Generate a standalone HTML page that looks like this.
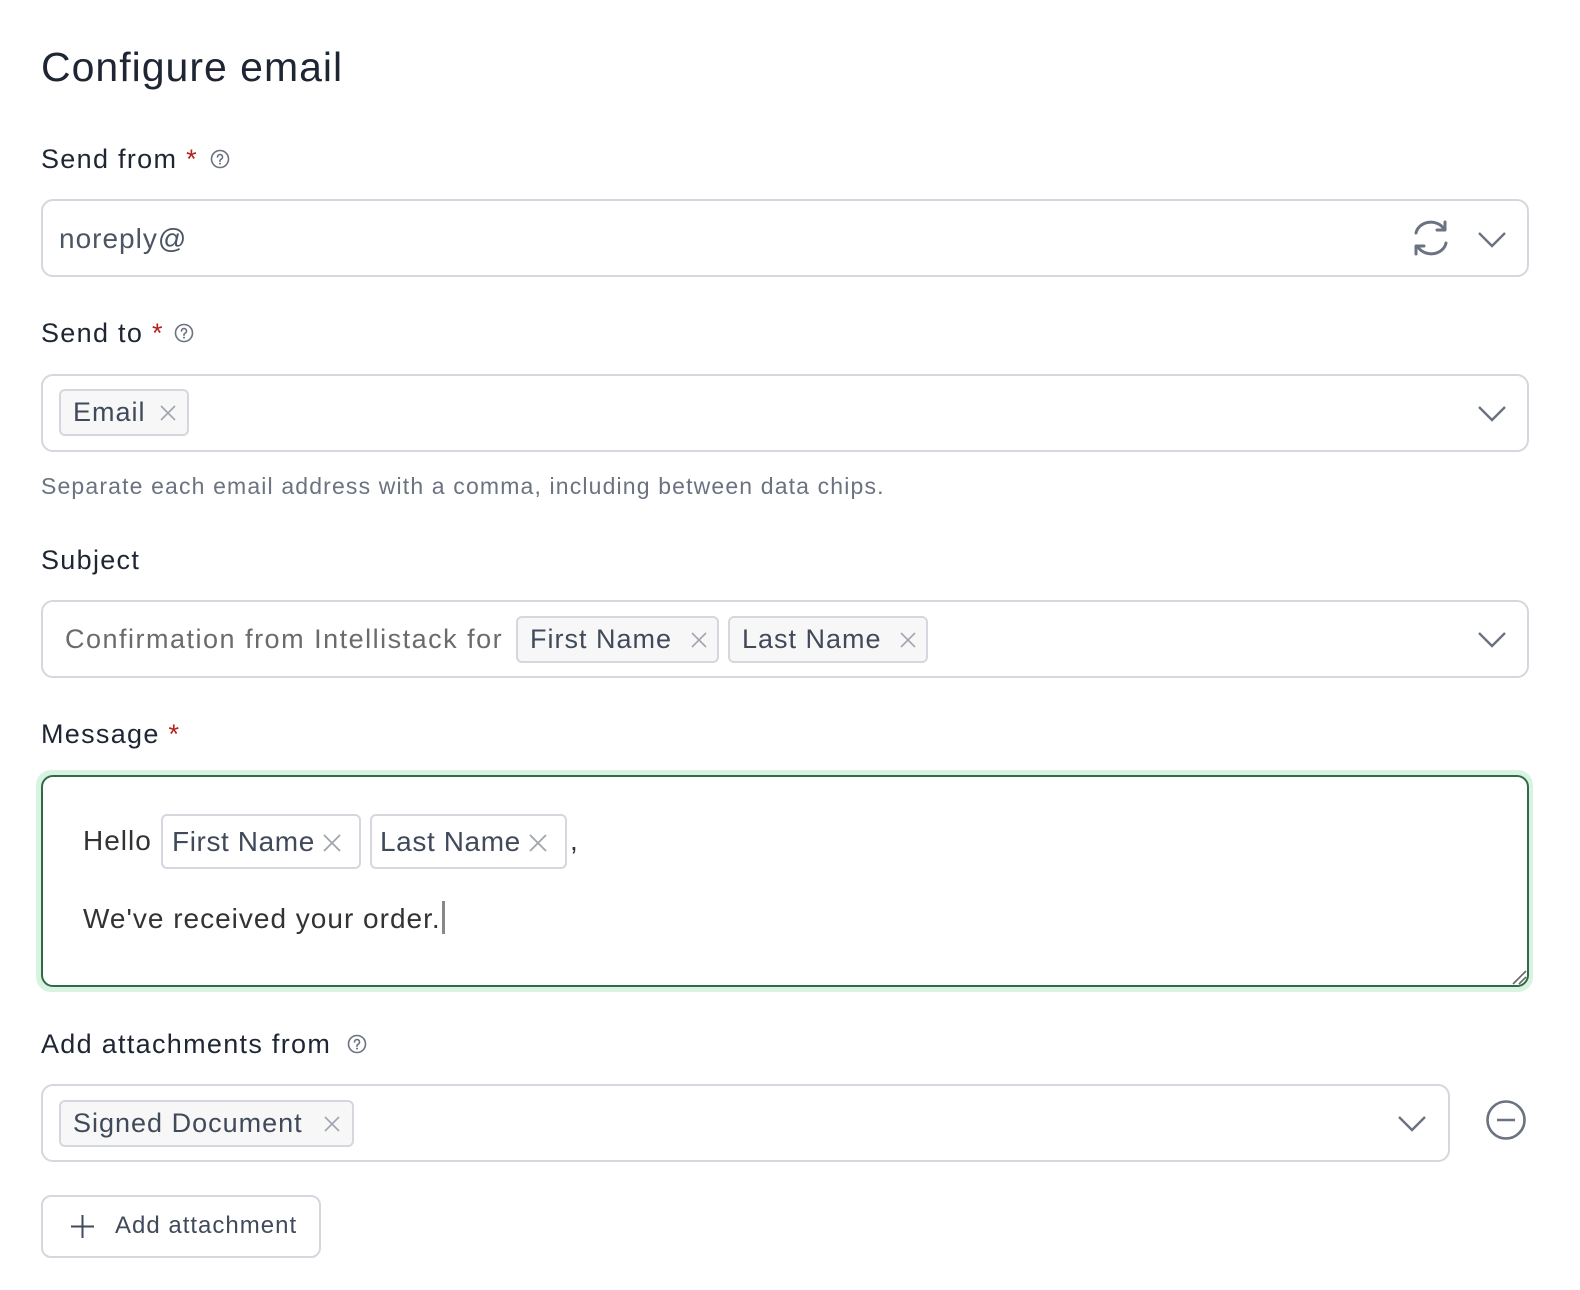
<!DOCTYPE html>
<html><head><meta charset="utf-8"><style>
*{box-sizing:border-box;margin:0;padding:0}
body{width:1580px;height:1290px;background:#fff;font-family:"Liberation Sans",Arial,sans-serif;position:relative;overflow:hidden;color:#1f2937;letter-spacing:1px}
.a{position:absolute;white-space:nowrap}
.t{left:41px;top:42px;font-size:41px;color:#1e2533;line-height:50px;letter-spacing:1px}
.l{left:41px;font-size:27px;line-height:34px;color:#1e2533;letter-spacing:1.3px}
.req{color:#b42318}
.box{position:absolute;left:41px;width:1488px;height:78px;border:2px solid #d4d7dd;border-radius:12px;background:#fff}
.chip{position:absolute;height:47px;border:2px solid #d4d7dd;border-radius:6px;background:#f7f7f8;font-size:27px;color:#414a5a;line-height:43px;padding-left:12px;white-space:nowrap}
.chip svg{position:absolute;top:14px}
.help{position:absolute;width:20px;height:20px}
.chev{position:absolute;width:30px;height:18px}
</style></head><body>
<div class="a t">Configure email</div>

<div class="a l" style="top:142px">Send from <span class="req">*</span></div>
<svg class="help" style="left:210px;top:149px" viewBox="0 0 20 20"><circle cx="10" cy="10" r="8.5" fill="none" stroke="#6b7280" stroke-width="1.6"/><path d="M7.5 8a2.5 2.5 0 1 1 3.5 2.3c-.7.3-1 .8-1 1.5v.4" fill="none" stroke="#6b7280" stroke-width="1.6" stroke-linecap="round"/><circle cx="10" cy="14.6" r="1" fill="#6b7280"/></svg>
<div class="box" style="top:199px"></div>
<div class="a" style="left:59px;top:222px;font-size:28px;color:#4b5563;line-height:34px">noreply@</div>
<svg class="a" style="left:1411px;top:218px" width="40" height="40" viewBox="0 0 40 40"><path d="M5 15a15 13 0 0 1 28-4" fill="none" stroke="#6b7280" stroke-width="3" stroke-linecap="round"/><path d="M34 4v8h-8" fill="none" stroke="#6b7280" stroke-width="3" stroke-linecap="round" stroke-linejoin="round"/><path d="M35 25a15 13 0 0 1-28 4" fill="none" stroke="#6b7280" stroke-width="3" stroke-linecap="round"/><path d="M5 36v-8h8" fill="none" stroke="#6b7280" stroke-width="3" stroke-linecap="round" stroke-linejoin="round"/></svg>
<svg class="chev" style="left:1477px;top:230px" viewBox="0 0 30 18"><path d="M2 3l13 13 13-13" fill="none" stroke="#6b7280" stroke-width="2.4"/></svg>

<div class="a l" style="top:316px">Send to <span class="req">*</span></div>
<svg class="help" style="left:174px;top:323px" viewBox="0 0 20 20"><circle cx="10" cy="10" r="8.5" fill="none" stroke="#6b7280" stroke-width="1.6"/><path d="M7.5 8a2.5 2.5 0 1 1 3.5 2.3c-.7.3-1 .8-1 1.5v.4" fill="none" stroke="#6b7280" stroke-width="1.6" stroke-linecap="round"/><circle cx="10" cy="14.6" r="1" fill="#6b7280"/></svg>
<div class="box" style="top:374px"></div>
<div class="chip" style="left:59px;top:389px;width:130px">Email<svg style="left:99px" width="16" height="16" viewBox="0 0 16 16"><path d="M1 1l14 14M15 1L1 15" stroke="#a0a5ae" stroke-width="1.6"/></svg></div>
<svg class="chev" style="left:1477px;top:404px" viewBox="0 0 30 18"><path d="M2 3l13 13 13-13" fill="none" stroke="#6b7280" stroke-width="2.4"/></svg>
<div class="a" style="left:41px;top:472px;font-size:23px;color:#6b7280;line-height:28px;letter-spacing:1.15px">Separate each email address with a comma, including between data chips.</div>

<div class="a l" style="top:543px">Subject</div>
<div class="box" style="top:600px"></div>
<div class="a" style="left:65px;top:622px;font-size:27px;color:#6b6b6b;line-height:34px;letter-spacing:1.5px">Confirmation from Intellistack for</div>
<div class="chip" style="left:516px;top:616px;width:203px">First Name<svg style="left:173px" width="16" height="16" viewBox="0 0 16 16"><path d="M1 1l14 14M15 1L1 15" stroke="#a0a5ae" stroke-width="1.6"/></svg></div>
<div class="chip" style="left:728px;top:616px;width:200px">Last Name<svg style="left:170px" width="16" height="16" viewBox="0 0 16 16"><path d="M1 1l14 14M15 1L1 15" stroke="#a0a5ae" stroke-width="1.6"/></svg></div>
<svg class="chev" style="left:1477px;top:630px" viewBox="0 0 30 18"><path d="M2 3l13 13 13-13" fill="none" stroke="#6b7280" stroke-width="2.4"/></svg>

<div class="a l" style="top:717px">Message <span class="req">*</span></div>
<div class="a" style="left:36px;top:770px;width:1497px;height:222px;border-radius:15px;background:#d9f3e3"></div>
<div class="a" style="left:41px;top:775px;width:1488px;height:212px;border:2px solid #2f6b45;border-radius:12px;background:#fff"></div>
<div class="a" style="left:83px;top:824px;font-size:28px;color:#333;line-height:34px">Hello</div>
<div class="chip" style="left:161px;top:814px;width:200px;height:55px;line-height:51px;background:#fff;padding-left:9px;font-size:28px;letter-spacing:.6px">First Name<svg style="left:160px;top:18px" width="18" height="18" viewBox="0 0 18 18"><path d="M1 1l16 16M17 1L1 17" stroke="#a0a5ae" stroke-width="1.8"/></svg></div>
<div class="chip" style="left:370px;top:814px;width:197px;height:55px;line-height:51px;background:#fff;padding-left:8px;font-size:28px;letter-spacing:.6px">Last Name<svg style="left:157px;top:18px" width="18" height="18" viewBox="0 0 18 18"><path d="M1 1l16 16M17 1L1 17" stroke="#a0a5ae" stroke-width="1.8"/></svg></div>
<div class="a" style="left:570px;top:824px;font-size:28px;color:#333;line-height:34px">,</div>
<div class="a" style="left:83px;top:902px;font-size:28px;color:#333;line-height:34px">We've received your order.</div>
<div class="a" style="left:442px;top:901px;width:3px;height:33px;background:#888"></div>
<svg class="a" style="left:1510px;top:968px" width="18" height="18" viewBox="0 0 18 18"><path d="M3 16L16 3M9 16l7-7" stroke="#666" stroke-width="1.6"/></svg>

<div class="a l" style="top:1027px">Add attachments from</div>
<svg class="help" style="left:347px;top:1034px" viewBox="0 0 20 20"><circle cx="10" cy="10" r="8.5" fill="none" stroke="#6b7280" stroke-width="1.6"/><path d="M7.5 8a2.5 2.5 0 1 1 3.5 2.3c-.7.3-1 .8-1 1.5v.4" fill="none" stroke="#6b7280" stroke-width="1.6" stroke-linecap="round"/><circle cx="10" cy="14.6" r="1" fill="#6b7280"/></svg>
<div class="box" style="top:1084px;width:1409px"></div>
<div class="chip" style="left:59px;top:1100px;width:295px">Signed Document<svg style="left:263px" width="16" height="16" viewBox="0 0 16 16"><path d="M1 1l14 14M15 1L1 15" stroke="#a0a5ae" stroke-width="1.6"/></svg></div>
<svg class="chev" style="left:1397px;top:1114px" viewBox="0 0 30 18"><path d="M2 3l13 13 13-13" fill="none" stroke="#6b7280" stroke-width="2.4"/></svg>
<svg class="a" style="left:1485px;top:1099px" width="42" height="42" viewBox="0 0 42 42"><circle cx="21" cy="21" r="18.5" fill="none" stroke="#6b7280" stroke-width="2.6"/><path d="M12 21h18" stroke="#6b7280" stroke-width="2.6"/></svg>

<div class="a" style="left:41px;top:1195px;width:280px;height:63px;border:2px solid #d4d7dd;border-radius:10px;background:#fff"></div>
<svg class="a" style="left:70px;top:1214px" width="25" height="25" viewBox="0 0 25 25"><path d="M12.5 1v23M1 12.5h23" stroke="#414a5a" stroke-width="2"/></svg>
<div class="a" style="left:115px;top:1211px;font-size:24px;color:#414a5a;line-height:30px">Add attachment</div>
</body></html>
